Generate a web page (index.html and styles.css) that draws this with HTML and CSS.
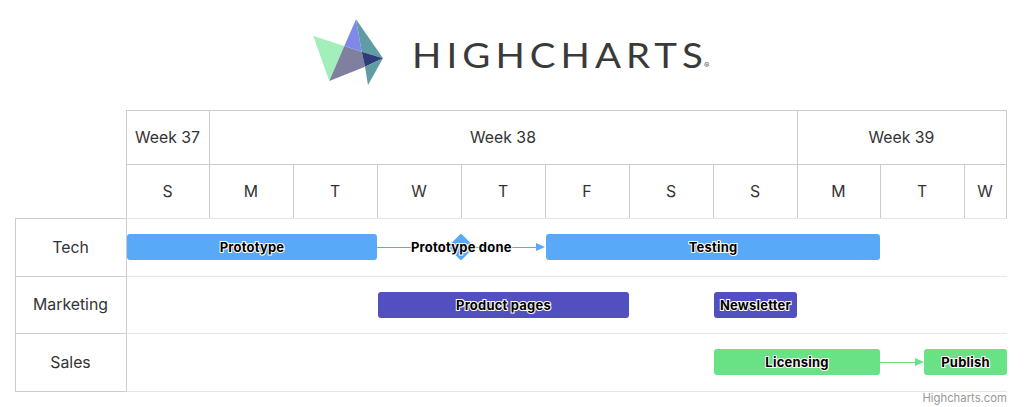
FILE: index.html
```html
<!DOCTYPE html>
<html lang="en">
<head>
<meta charset="utf-8">
<title>Highcharts Gantt</title>
<link rel="stylesheet" href="styles.css">
</head>
<body>
<header class="brand">
  <svg class="brand-mark" width="72" height="68" viewBox="313 19 72 68" aria-hidden="true">
    <polygon fill="#a2efbb" points="313.3,36 329.3,81 344.3,46"/>
    <polygon fill="#7f7f9f" points="344.3,46 361.7,51.7 365,66.7 329.3,81"/>
    <polygon fill="#8088ea" points="356,19.3 344.3,46 361.7,51.7"/>
    <polygon fill="#5f9ca3" points="356,19.3 383,58.3 361.7,51.7"/>
    <polygon fill="#2d3d78" points="361.7,51.7 383,58.3 365,66.7"/>
    <polygon fill="#5f9ca3" points="365,66.7 383,58.3 368,85"/>
  </svg>
  <div class="brand-name">HIGHCHARTS</div>
  <div class="brand-reg">®</div>
</header>
<main class="chart">
  <div class="cell head week-37">Week 37</div>
  <div class="cell head week-38">Week 38</div>
  <div class="cell head week-39">Week 39</div>

  <div class="cell head day-first">S</div>
  <div class="cell head">M</div>
  <div class="cell head">T</div>
  <div class="cell head">W</div>
  <div class="cell head">T</div>
  <div class="cell head">F</div>
  <div class="cell head">S</div>
  <div class="cell head">S</div>
  <div class="cell head">M</div>
  <div class="cell head">T</div>
  <div class="cell head day-last">W</div>

  <div class="cell label">Tech</div>
  <div class="track">
    <div class="bar blue span-proto">Prototype</div>
    <div class="link link-blue span-done">
      <span class="link-line"></span><span class="link-head"></span>
      <svg class="diamond" width="26" height="26" viewBox="0 0 26 26" aria-hidden="true"><polygon points="13,1.5 24.5,13 13,24.5 1.5,13"/></svg>
      <span class="milestone-label">Prototype done</span>
    </div>
    <div class="bar blue span-test">Testing</div>
  </div>

  <div class="cell label">Marketing</div>
  <div class="track">
    <div class="bar purple span-pages">Product pages</div>
    <div class="bar purple span-news">Newsletter</div>
  </div>

  <div class="cell label cell-last">Sales</div>
  <div class="track track-last">
    <div class="bar green span-lic">Licensing</div>
    <div class="publish-group">
      <div class="link link-green"><span class="link-line"></span><span class="link-head"></span></div>
      <div class="bar green publish">Publish</div>
    </div>
  </div>
</main>
<footer class="credits">Highcharts.com</footer>
</body>
</html>
```
FILE: styles.css
```css
* { box-sizing: border-box; }
html, body { margin: 0; height: 407px; overflow: hidden; background: #fff; }
body { font-family: Inter, "Liberation Sans", sans-serif; color: #333; }

.brand {
  height: 110px;
  display: flex;
  align-items: flex-start;
  padding: 19px 0 0 313px;
}
.brand-mark { display: block; flex: none; }
.brand-name {
  margin: 14px 0 0 27px;
  width: 280px;
  flex: none;
  font-family: Lato, sans-serif;
  font-weight: 400;
  font-size: 34px;
  line-height: 44px;
  letter-spacing: 4.5px;
  color: #3a3a3a;
  white-space: nowrap;
  transform: scaleX(1.13);
  transform-origin: left center;
}
.brand-reg { margin: 41px 0 0 12px; font-size: 8px; line-height: 10px; color: #555; }

.chart {
  margin-left: 15px;
  width: 992px;
  display: grid;
  grid-template-columns: 111px 83px 84px 84px 84px 84px 84px 84px 84px 83px 84px 43px;
  grid-template-rows: 54px 54px 58px 57px 59px;
}
.cell {
  display: flex;
  align-items: center;
  justify-content: center;
  padding: 0 1px 1px 0;
  font-size: 15.8px;
  border-left: 1px solid #ccc;
  border-top: 1px solid #ccc;
}
.week-37 { grid-column: 2 / 3; }
.week-38 { grid-column: 3 / 10; }
.week-39 { grid-column: 10 / 13; border-right: 1px solid #ccc; }
.day-first { grid-column: 2 / 3; }
.day-last { border-right: 1px solid #ccc; }

.label { grid-column: 1; }
.cell-last { border-bottom: 1px solid #ccc; }

.track {
  grid-column: 2 / -1;
  display: grid;
  grid-template-columns: subgrid;
  align-items: center;
  padding-bottom: 1px;
  border-left: 1px solid #ccc;
  border-top: 1px solid #e6e6e6;
}
.track-last { border-bottom: 1px solid #e6e6e6; }

.bar {
  height: 26px;
  margin-left: 1px;
  border-radius: 3px;
  display: flex;
  align-items: center;
  justify-content: center;
  font-size: 13px;
  font-weight: 700;
  letter-spacing: 0.2px;
  color: #000;
  -webkit-text-stroke: 2px #fff;
  paint-order: stroke fill;
  white-space: nowrap;
}
.blue { background: #58aaf8; }
.purple { background: #5250c0; }
.green { background: #68e285; }

.span-proto { grid-column: 1 / 4; margin-left: 0; }
.span-done { grid-column: 4 / 6; }
.span-test { grid-column: 6 / 10; }
.span-pages { grid-column: 4 / 7; }
.span-news { grid-column: 8 / 9; }
.span-lic { grid-column: 8 / 10; }

.publish-group { grid-column: 10 / 12; display: flex; align-items: center; }
.publish { width: 83px; flex: none; margin-left: 0; }

.link { position: relative; flex: 1; display: flex; align-items: center; }
.link-line { flex: 1; height: 1px; }
.link-head {
  width: 0; height: 0; flex: none;
  border-top: 4px solid transparent;
  border-bottom: 4px solid transparent;
  border-left: 9px solid;
}
.link-blue .link-line { background: #58aaf8; }
.link-blue .link-head { border-left-color: #58aaf8; }
.link-green .link-line { background: #68e285; }
.link-green .link-head { border-left-color: #68e285; }
.diamond {
  position: absolute;
  left: 71px;
  top: 50%;
  margin-top: -13px;
  fill: #58aaf8;
  stroke: #58aaf8;
  stroke-width: 3;
  stroke-linejoin: round;
}
.milestone-label {
  position: absolute;
  left: 34px;
  top: 50%;
  transform: translateY(-50%);
  font-size: 13px;
  font-weight: 700;
  letter-spacing: 0.2px;
  color: #000;
  -webkit-text-stroke: 2px #fff;
  paint-order: stroke fill;
  white-space: nowrap;
}

.credits {
  width: 1007px;
  text-align: right;
  font-size: 11.3px;
  line-height: 13px;
  color: #999;
}
```
